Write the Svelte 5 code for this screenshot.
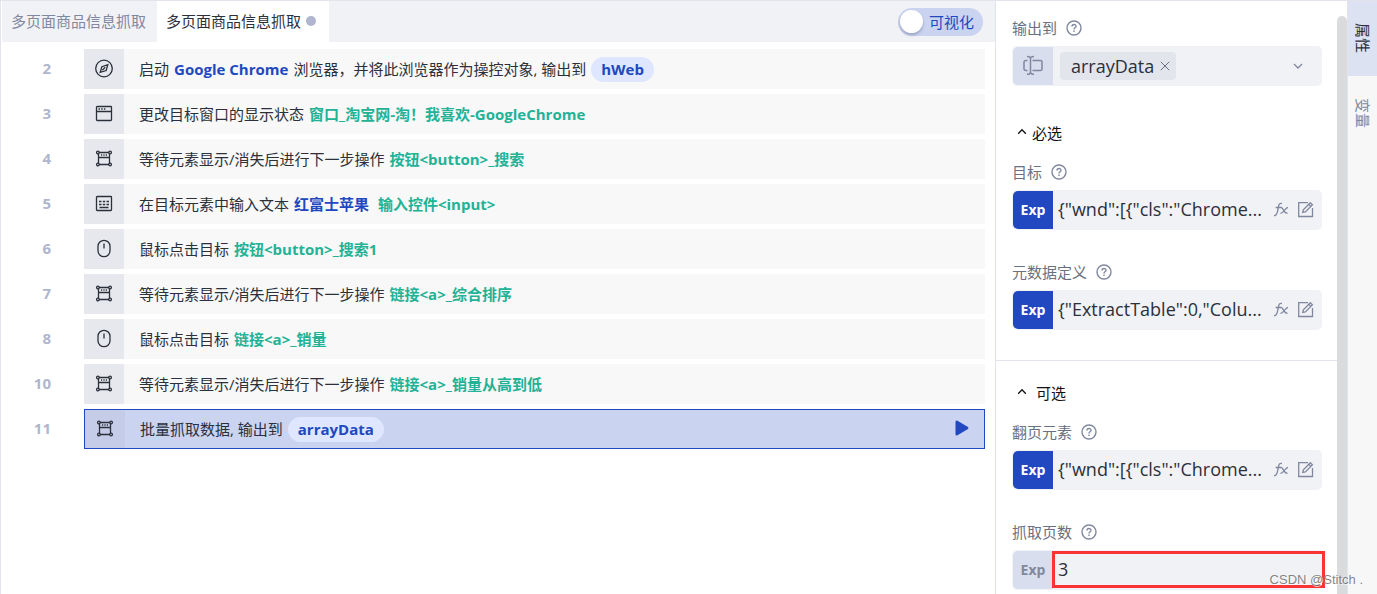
<script lang="ts">
	type Part = { text: string; kind: 'plain' | 'value' | 'element' | 'pill' };
	type Step = { line: number; icon: string; parts: Part[] };

	const plain = (text: string): Part => ({ text, kind: 'plain' });
	const value = (text: string): Part => ({ text, kind: 'value' });
	const element = (text: string): Part => ({ text, kind: 'element' });
	const pill = (text: string): Part => ({ text, kind: 'pill' });

	const steps: Step[] = [
		{
			line: 2,
			icon: 'compass',
			parts: [
				plain('启动'),
				value('Google Chrome'),
				plain('浏览器，并将此浏览器作为操控对象, 输出到'),
				pill('hWeb')
			]
		},
		{
			line: 3,
			icon: 'window',
			parts: [plain('更改目标窗口的显示状态'), element('窗口_淘宝网-淘！我喜欢-GoogleChrome')]
		},
		{
			line: 4,
			icon: 'frame',
			parts: [plain('等待元素显示/消失后进行下一步操作'), element('按钮<button>_搜索')]
		},
		{
			line: 5,
			icon: 'keyboard',
			parts: [plain('在目标元素中输入文本'), value('红富士苹果 '), element('输入控件<input>')]
		},
		{ line: 6, icon: 'mouse', parts: [plain('鼠标点击目标'), element('按钮<button>_搜索1')] },
		{
			line: 7,
			icon: 'frame',
			parts: [plain('等待元素显示/消失后进行下一步操作'), element('链接<a>_综合排序')]
		},
		{ line: 8, icon: 'mouse', parts: [plain('鼠标点击目标'), element('链接<a>_销量')] },
		{
			line: 10,
			icon: 'frame',
			parts: [plain('等待元素显示/消失后进行下一步操作'), element('链接<a>_销量从高到低')]
		},
		{ line: 11, icon: 'frame', parts: [plain('批量抓取数据, 输出到'), pill('arrayData')] }
	];

	let selected = $state(11);
	let visual = $state(true);
	let activeTab = $state(1);
	let activeSide = $state(0);
	let target = $state('{"wnd":[{"cls":"Chrome...');
	let metadata = $state('{"ExtractTable":0,"Colu...');
	let pager = $state('{"wnd":[{"cls":"Chrome...');
	let pages = $state('3');
</script>

{#snippet stepIcon(name: string)}
	<svg class="step-icon" viewBox="0 0 20 20" aria-hidden="true">
		{#if name === 'compass'}
			<circle cx="10" cy="9.5" r="8.3" />
			<path d="M13.8 5.7 L12.2 11.5 L6.2 13.3 L7.9 7.7 Z M11.2 8.3 L8.4 11.1" />
		{:else if name === 'window'}
			<rect x="2.5" y="2.5" width="15" height="14" rx="0.8" />
			<path d="M2.5 7.5 H17.5 M4.5 5 H6 M7.2 5 H8.7 M9.9 5 H11.4" />
		{:else if name === 'frame'}
			<path d="M5 3.5 H15 M5 15.5 H15 M4.5 4.5 V14.5 M15.5 4.5 V14.5 M4.5 8.5 H15.5" />
			<path d="M7 6 H8.2 M9.4 6 H10.6 M11.8 6 H13" />
			<circle cx="3.9" cy="3.5" r="1.3" />
			<circle cx="16.1" cy="3.5" r="1.3" />
			<circle cx="3.9" cy="15.5" r="1.3" />
			<circle cx="16.1" cy="15.5" r="1.3" />
		{:else if name === 'keyboard'}
			<rect x="2.5" y="2.5" width="15" height="14" rx="0.8" />
			<path d="M5 7.5 H7.5 M8.8 7.5 H11.2 M12.5 7.5 H15 M5 10.5 H7.5 M8.8 10.5 H11.2 M12.5 10.5 H15 M5.5 13.5 H14.5" />
		{:else}
			<rect x="4" y="1.3" width="12" height="16.4" rx="6" />
			<path d="M10 4.5 V9.5" />
		{/if}
	</svg>
{/snippet}

{#snippet help()}
	<svg class="help" viewBox="0 0 16 16" aria-hidden="true">
		<circle cx="8" cy="8" r="7" />
		<path d="M6 6.5 C6 3.8 10.1 3.9 10 6.4 C9.9 7.8 8 7.8 8 9.4 M8 10.6 V12" />
	</svg>
{/snippet}

{#snippet chevronUp()}
	<svg class="chevron" viewBox="0 0 10 10" aria-hidden="true">
		<path d="M1.2 6.8 L5 2.8 L8.8 6.8" />
	</svg>
{/snippet}

{#snippet fieldTools()}
	<button class="tool" aria-label="函数">
		<svg viewBox="0 0 16 16" aria-hidden="true">
			<path d="M1 13.5 C3.8 14 4.2 11 4.8 8 L5.6 4.1 C6 1.7 7 1.1 9 1.5 M2.6 5.5 H8.2" />
			<path d="M8 5.5 C10.5 5 10.5 12 14.6 11.1 M15 5.5 C12.4 5.3 10.6 11.8 7.4 11.3" />
		</svg>
	</button>
	<button class="tool" aria-label="编辑">
		<svg viewBox="0 0 16 16" aria-hidden="true">
			<path d="M10 0.7 H0.7 V14.5 H14.5 V6" />
			<path d="M4.7 10.5 L5.3 7.8 L12.3 0.7 L14.4 2.8 L7.4 9.9 Z M10.7 2.3 L12.7 4.5" />
		</svg>
	</button>
{/snippet}

<div class="app">
	<main>
		<div class="tabs">
			<button class="tab" class:active={activeTab === 0} onclick={() => (activeTab = 0)}>
				多页面商品信息抓取
			</button>
			<button class="tab" class:active={activeTab === 1} onclick={() => (activeTab = 1)}>
				多页面商品信息抓取<span class="dot"></span>
			</button>
			<label class="toggle" class:on={visual}>
				<input type="checkbox" bind:checked={visual} />
				<span class="knob"></span>
				可视化
			</label>
		</div>
		<ol class="steps">
			{#each steps as step}
				<li>
					<span class="line">{step.line}</span>
					<button
						class="step"
						class:selected={selected === step.line}
						onclick={() => (selected = step.line)}
					>
						<span class="icon-box">{@render stepIcon(step.icon)}</span>
						<span class="text">
							{#each step.parts as part}
								<span class={part.kind}>{part.text}</span>
							{/each}
						</span>
						{#if selected === step.line}
							<svg class="play" viewBox="0 0 14 18" aria-hidden="true">
								<path d="M2 0.5 Q0.5 0.3 0.5 2 V14 Q0.5 15.7 2 15.5 L13 9 Q14 8 13 7 Z" />
							</svg>
						{/if}
					</button>
				</li>
			{/each}
		</ol>
	</main>

	<aside>
		<div class="panel">
			<div class="field">
				<div class="label"><span id="output-label">输出到</span>{@render help()}</div>
				<div class="control" role="group" aria-labelledby="output-label">
					<span class="mode muted">
						<svg class="variable" viewBox="0 0 20 20" aria-hidden="true">
							<path d="M4.5 5.5 H3 Q1 5.5 1 7.5 V13.5 Q1 15.5 3 15.5 H4.5 M9.5 5.5 H17.5 Q19 5.5 19 7 V14 Q19 15.5 17.5 15.5 H9.5" />
							<path d="M7.5 3 V18 M4 1.5 Q7.5 1.5 7.5 3.5 Q7.5 1.5 11 1.5 M4 19.3 Q7.5 19.3 7.5 17.3 Q7.5 19.3 11 19.3" />
						</svg>
					</span>
					<span class="chip">
						<span>arrayData</span>
						<button aria-label="移除">
							<svg viewBox="0 0 10 10" aria-hidden="true"><path d="M0.8 0.8 L9.2 9.2 M9.2 0.8 L0.8 9.2" /></svg>
						</button>
					</span>
					<button class="open" aria-label="展开">
						<svg class="chevron" viewBox="0 0 10 10" aria-hidden="true"><path d="M1 3 L5 7 L9 3" /></svg>
					</button>
				</div>
			</div>

			<section>
				<button class="heading">{@render chevronUp()}必选</button>
				<div class="field">
					<div class="label"><label for="target">目标</label>{@render help()}</div>
					<div class="control">
						<button class="mode">Exp</button>
						<input id="target" type="text" bind:value={target} />
						{@render fieldTools()}
					</div>
				</div>
				<div class="field">
					<div class="label"><label for="metadata">元数据定义</label>{@render help()}</div>
					<div class="control">
						<button class="mode">Exp</button>
						<input id="metadata" type="text" bind:value={metadata} />
						{@render fieldTools()}
					</div>
				</div>
			</section>

			<section class="optional">
				<button class="heading">{@render chevronUp()}可选</button>
				<div class="field">
					<div class="label"><label for="pager">翻页元素</label>{@render help()}</div>
					<div class="control">
						<button class="mode">Exp</button>
						<input id="pager" type="text" bind:value={pager} />
						{@render fieldTools()}
					</div>
				</div>
				<div class="field">
					<div class="label"><label for="pages">抓取页数</label>{@render help()}</div>
					<div class="control marked">
						<button class="mode muted">Exp</button>
						<input id="pages" type="text" bind:value={pages} />
					</div>
				</div>
			</section>
		</div>
		<div class="scrollbar"><div class="thumb"></div></div>
		<nav>
			<button class:active={activeSide === 0} onclick={() => (activeSide = 0)}>属性</button>
			<button class:active={activeSide === 1} onclick={() => (activeSide = 1)}>变量</button>
		</nav>
	</aside>
	<span class="watermark">CSDN @Stitch .</span>
</div>

<style>
	:global(body) {
		background: #fff;
		overflow: hidden;
	}
	.app {
		position: relative;
		display: flex;
		height: 100vh;
		box-sizing: border-box;
		overflow: hidden;
		border-top: 1px solid #e3e4eb;
		border-left: 1px solid #e3e4eb;
		font-family: 'Open Sans', 'Noto Sans CJK SC', sans-serif;
		font-size: 15px;
		color: #2b303b;
	}
	button {
		margin: 0;
		padding: 0;
		border: 0;
		background: none;
		font: inherit;
		color: inherit;
		cursor: pointer;
	}
	svg {
		flex: none;
		fill: none;
		stroke: currentColor;
	}
	main {
		flex: 1;
		min-width: 0;
	}
	.tabs {
		display: flex;
		align-items: center;
		height: 41px;
		margin-left: 1px;
		padding-right: 12px;
		background: #f1f2f6;
	}
	.tab {
		display: flex;
		align-items: center;
		gap: 5px;
		height: 100%;
		padding: 0 11px 2px 9px;
		color: #8088a0;
		white-space: nowrap;
	}
	.tab.active {
		padding-right: 13px;
		background: #fff;
		color: #2b303b;
	}
	.dot {
		width: 10px;
		height: 10px;
		border-radius: 50%;
		background: #b0b6d0;
	}
	.toggle {
		display: flex;
		align-items: center;
		gap: 6px;
		height: 28px;
		margin-left: auto;
		padding: 0 9px 0 2px;
		border-radius: 14px;
		background: #e3e4eb;
		cursor: pointer;
	}
	.toggle.on {
		background: #cad3f0;
		color: #2148c0;
	}
	.toggle input {
		appearance: none;
		width: 0;
		height: 0;
		margin: 0 -6px 0 0;
	}
	.knob {
		width: 23px;
		height: 23px;
		border-radius: 50%;
		background: #fff;
		box-shadow: 0 2px 3px rgba(0, 20, 60, 0.25);
	}
	.steps {
		display: flex;
		flex-direction: column;
		gap: 5px;
		margin: 0;
		padding: 7px 10px 0 0;
		list-style: none;
	}
	li {
		display: flex;
		align-items: center;
		gap: 33px;
	}
	.line {
		width: 50px;
		padding-bottom: 2px;
		text-align: right;
		font-weight: bold;
		color: #b0b6cc;
	}
	.step {
		display: flex;
		flex: 1;
		align-items: center;
		min-width: 0;
		height: 40px;
		background: #f8f8f8;
		text-align: left;
	}
	.step.selected {
		border: 1px solid #2148c0;
		background: #cad3f0;
	}
	.icon-box {
		display: flex;
		align-items: center;
		justify-content: center;
		width: 40px;
		height: 100%;
		background: #e7e8ee;
	}
	.selected .icon-box {
		background: #c4cce8;
	}
	.step-icon {
		width: 20px;
		height: 20px;
		stroke-width: 1.3;
	}
	.text {
		display: flex;
		flex: 1;
		gap: 5px;
		padding-left: 15px;
		white-space: nowrap;
		line-height: 25px;
	}
	.value,
	.element,
	.pill {
		font-weight: bold;
	}
	.value {
		color: #2148c0;
		white-space: pre;
	}
	.element {
		color: #22b296;
	}
	.pill {
		padding: 0 10px;
		border-radius: 13px;
		background: #dfe6ff;
		color: #2148c0;
	}
	.play {
		width: 14px;
		height: 18px;
		margin-right: 15px;
		fill: #2148c0;
		stroke: none;
	}
	aside {
		display: flex;
		flex: none;
		width: 382px;
		box-sizing: border-box;
		border-left: 1px solid #e3e4eb;
	}
	.panel {
		flex: 1;
		min-width: 0;
		padding-top: 9px;
	}
	.field {
		padding: 0 15px 24px 16px;
	}
	.label {
		display: flex;
		align-items: center;
		gap: 9px;
		height: 36px;
		color: #6b7080;
	}
	.label > :first-child {
		padding-bottom: 2px;
	}
	.help {
		width: 16px;
		height: 16px;
		color: #8088a0;
		stroke-width: 1.4;
	}
	.control {
		position: relative;
		display: flex;
		align-items: center;
		height: 40px;
		box-sizing: border-box;
		padding: 1px 8px 1px 1px;
		border-radius: 5px;
		background: #f1f2f6;
	}
	.mode {
		display: flex;
		flex: none;
		align-items: center;
		justify-content: center;
		width: 40px;
		height: 100%;
		box-sizing: border-box;
		padding-bottom: 2px;
		border-radius: 5px 0 0 5px;
		background: #2148c0;
		color: #fff;
		font-size: 14px;
		font-weight: bold;
	}
	.mode.muted {
		background: #d9deee;
		color: #8088a0;
	}
	.variable {
		width: 20px;
		height: 20px;
		stroke-width: 1.5;
	}
	.chip {
		display: flex;
		align-items: center;
		gap: 6px;
		height: 28px;
		margin-left: 7px;
		padding: 0 6px 0 11px;
		border-radius: 4px;
		background: #e3e5ec;
		font-size: 18px;
	}
	.chip button {
		display: flex;
	}
	.chip svg {
		width: 10px;
		height: 10px;
		color: #6b7080;
	}
	.open {
		display: flex;
		margin-left: auto;
		margin-right: 11px;
		color: #8088a0;
	}
	.chevron {
		width: 10px;
		height: 10px;
		stroke-width: 1.3;
	}
	.control input {
		flex: 1;
		min-width: 0;
		height: 100%;
		box-sizing: border-box;
		padding: 0 0 2px 5px;
		border: 0;
		outline: 0;
		background: none;
		font: inherit;
		font-size: 18px;
		color: inherit;
		text-overflow: ellipsis;
	}
	.tool {
		display: flex;
		margin-left: 9px;
		color: #8088a0;
	}
	.tool svg {
		width: 16px;
		height: 16px;
		stroke-width: 1.3;
	}
	section {
		padding-bottom: 6px;
		border-bottom: 1px solid #e3e4eb;
	}
	.optional {
		padding-top: 9px;
		border-bottom: 0;
	}
	.heading {
		display: flex;
		align-items: center;
		gap: 5px;
		height: 44px;
		padding-left: 21px;
		color: #111;
	}
	.optional .heading {
		gap: 9px;
	}
	.marked::after {
		content: '';
		position: absolute;
		inset: 1px -3px 2px 40px;
		border: 3px solid #fa3434;
		pointer-events: none;
	}
	.scrollbar {
		width: 10px;
		padding-top: 15px;
	}
	.thumb {
		height: 100%;
		border-radius: 5px 5px 0 0;
		background: #dadbdd;
	}
	nav {
		display: flex;
		flex-direction: column;
		width: 29px;
		border-left: 1px solid #e3e4eb;
		background: #f7f7f8;
	}
	nav button {
		height: 75px;
		line-height: 29px;
		writing-mode: vertical-rl;
		text-orientation: sideways;
		color: #8088a0;
	}
	nav button.active {
		background: #dce2f2;
		color: #2b303b;
	}
	.watermark {
		position: absolute;
		right: 14px;
		bottom: 7px;
		font-family: 'Liberation Sans', sans-serif;
		font-size: 13px;
		color: rgba(110, 110, 110, 0.85);
		text-shadow: 1px 1px 0 rgba(255, 255, 255, 0.7);
		pointer-events: none;
	}
</style>
